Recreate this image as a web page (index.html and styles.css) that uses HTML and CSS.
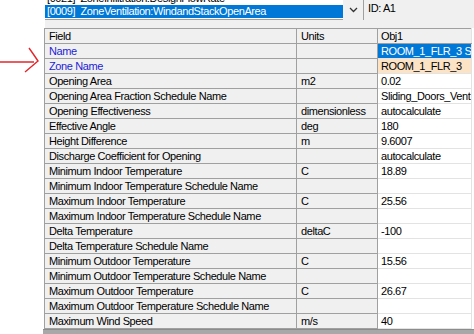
FILE: index.html
```html
<!DOCTYPE html>
<html lang="en">
<head>
  <meta charset="UTF-8" />
  <title>IDF Editor - ZoneVentilation</title>
  <link rel="stylesheet" href="styles.css">
</head>
<body>

<div class="top">
  <div class="gutter"></div>
  <div class="classlist">
    <div class="item first">[0021]&nbsp; ZoneInfiltration:DesignFlowRate</div>
    <div class="item selected">[0009]&nbsp; ZoneVentilation:WindandStackOpenArea</div>
  </div>
  <div class="drop">
    <svg width="9" height="6" viewBox="0 0 9 6"><path d="M1 1 L4.5 4.5 L8 1" fill="none" stroke="#333" stroke-width="1.3"/></svg>
  </div>
  <div class="idbox">ID: A1</div>
</div>

<div class="main">
  <div class="gutter">
    <svg class="arrow" width="44" height="30" viewBox="0 0 44 30">
      <path d="M0 17 L34 17" stroke="#e3262b" stroke-width="1.4" fill="none"/>
      <path d="M29 3 Q34 10 38 16 Q31 22 25 27" stroke="#e3262b" stroke-width="1.4" fill="none"/>
    </svg>
  </div>
  <table class="grid">
    <colgroup>
      <col class="c-field"><col class="c-units"><col class="c-obj">
    </colgroup>
    <tr class="head"><td>Field</td><td>Units</td><td class="obj">Obj1</td></tr>
    <tr><td class="req">Name</td><td></td><td class="obj sel">ROOM_1_FLR_3 S</td></tr>
    <tr><td class="req">Zone Name</td><td></td><td class="obj ref">ROOM_1_FLR_3</td></tr>
    <tr><td>Opening Area</td><td>m2</td><td class="obj">0.02</td></tr>
    <tr><td>Opening Area Fraction Schedule Name</td><td></td><td class="obj">Sliding_Doors_Vent</td></tr>
    <tr><td>Opening Effectiveness</td><td>dimensionless</td><td class="obj">autocalculate</td></tr>
    <tr><td>Effective Angle</td><td>deg</td><td class="obj">180</td></tr>
    <tr><td>Height Difference</td><td>m</td><td class="obj">9.6007</td></tr>
    <tr><td>Discharge Coefficient for Opening</td><td></td><td class="obj">autocalculate</td></tr>
    <tr><td>Minimum Indoor Temperature</td><td>C</td><td class="obj">18.89</td></tr>
    <tr><td>Minimum Indoor Temperature Schedule Name</td><td></td><td class="obj"></td></tr>
    <tr><td>Maximum Indoor Temperature</td><td>C</td><td class="obj">25.56</td></tr>
    <tr><td>Maximum Indoor Temperature Schedule Name</td><td></td><td class="obj"></td></tr>
    <tr><td>Delta Temperature</td><td>deltaC</td><td class="obj">-100</td></tr>
    <tr><td>Delta Temperature Schedule Name</td><td></td><td class="obj"></td></tr>
    <tr><td>Minimum Outdoor Temperature</td><td>C</td><td class="obj">15.56</td></tr>
    <tr><td>Minimum Outdoor Temperature Schedule Name</td><td></td><td class="obj"></td></tr>
    <tr><td>Maximum Outdoor Temperature</td><td>C</td><td class="obj">26.67</td></tr>
    <tr><td>Maximum Outdoor Temperature Schedule Name</td><td></td><td class="obj"></td></tr>
    <tr><td>Maximum Wind Speed</td><td>m/s</td><td class="obj">40</td></tr>
  </table>
</div>

<div class="bottom"></div>

</body>
</html>
```

FILE: styles.css
```css
body {
  font-family: 'Liberation Sans', Arial, sans-serif;
  font-size: 11px;
  letter-spacing: -0.4px;
  color: #000;
  background: #fff;
  margin: 0;
  padding: 0;
  width: 474px;
  height: 334px;
  overflow: hidden;
}
.top {
  display: flex;
  height: 28px;
  background: #f0f0f0;
}
.top .gutter {
  width: 45px;
  background: #fff;
}
.classlist {
  width: 298px;
  height: 19px;
  background: #fff;
  border-bottom: 1px solid #a0a0a0;
  overflow: hidden;
}
.item {
  height: 13px;
  line-height: 13px;
  padding-left: 2px;
  white-space: nowrap;
}
.item.first {
  margin-top: -8px;
}
.item.selected {
  background: #0078d7;
  color: #fff;
}
.drop {
  width: 20px;
  height: 20px;
  display: flex;
  align-items: center;
  justify-content: center;
  background: #f0f0f0;
}
.idbox {
  flex: 1;
  height: 20px;
  line-height: 17px;
  padding-left: 4px;
  border-left: 1px solid #a0a0a0;
}
.main {
  display: flex;
}
.main .gutter {
  width: 44px;
  flex: none;
}
.arrow {
  display: block;
  margin-top: 17px;
}
.grid {
  table-layout: fixed;
  border-collapse: collapse;
  width: 427px;
  border-left: 1px solid #a0a0a0;
}
.c-field { width: 252px; }
.c-units { width: 81px; }
.c-obj { width: 94px; }
.grid td {
  height: 14px;
  padding: 0 0 0 4px;
  line-height: 14px;
  white-space: nowrap;
  overflow: hidden;
  background: #f0f0f0;
  border-right: 1px solid #a0a0a0;
  border-bottom: 1px solid #a0a0a0;
}
.grid tr.head td {
  border-top: 1px solid #a0a0a0;
}
.grid td.obj {
  background: #fff;
  padding-left: 3px;
  border-right: 1px solid #e3e3e3;
  border-bottom: 1px solid #e3e3e3;
}
.grid tr.head td.obj {
  background: #f0f0f0;
  border-bottom-color: #a0a0a0;
}
.grid td.req {
  color: #1d1dd6;
}
.grid td.obj.sel {
  background: #0078d7;
  color: #fff;
}
.grid td.obj.ref {
  background: #fce3c6;
}
.bottom {
  margin-left: 43px;
  height: 6px;
  background: #a8a8a8;
  border-top: 1px solid #8c8c8c;
}
```
